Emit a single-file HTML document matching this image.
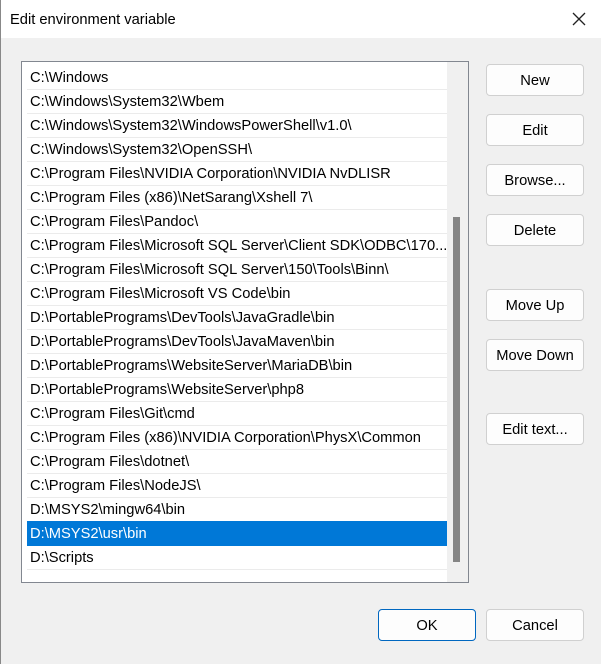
<!DOCTYPE html>
<html><head><meta charset="utf-8"><style>
*{margin:0;padding:0;box-sizing:border-box}
body{width:601px;height:664px;background:#f0f0f0;font-family:"Liberation Sans",sans-serif;font-size:14.7px;color:#000;position:relative;overflow:hidden}
.edge{position:absolute;left:0;top:0;width:1px;height:664px;background:#888}
.title{position:absolute;left:0;top:0;width:601px;height:38px;background:#fff}
.title span{position:absolute;left:10px;top:12px;font-size:14.7px}
.x{position:absolute;left:571px;top:11px}
.list{position:absolute;left:21px;top:61px;width:448px;height:522px;background:#fff;border:1px solid #828790}
.row{position:absolute;left:5px;width:420px;height:24px;line-height:23px;padding-top:1px;padding-left:3px;border-bottom:1px solid #ebebeb;white-space:nowrap;overflow:hidden}
.sel{background:#0078d7;color:#fff;border-bottom-color:#0078d7}
.sb{position:absolute;left:425px;top:0;width:21px;height:520px;background:#f0f0f0}
.thumb{position:absolute;left:6px;top:155px;width:7px;height:345px;background:#858585}
.btn{position:absolute;left:486px;width:98px;height:32px;background:#fdfdfd;border:1px solid #d0d0d0;border-radius:4px;text-align:center;line-height:33px;font-size:14.7px}
.ok{border:1px solid #0067c0}
</style></head><body>
<div class="title"><span>Edit environment variable</span>
<svg class="x" width="16" height="16" viewBox="0 0 16 16"><path d="M2 2L14 14M14 2L2 14" stroke="#222" stroke-width="1.3"/></svg></div>
<div class="edge"></div>
<div class="list">
<div class="row" style="top:4px">C:\Windows</div>
<div class="row" style="top:28px">C:\Windows\System32\Wbem</div>
<div class="row" style="top:52px">C:\Windows\System32\WindowsPowerShell\v1.0\</div>
<div class="row" style="top:76px">C:\Windows\System32\OpenSSH\</div>
<div class="row" style="top:100px">C:\Program Files\NVIDIA Corporation\NVIDIA NvDLISR</div>
<div class="row" style="top:124px">C:\Program Files (x86)\NetSarang\Xshell 7\</div>
<div class="row" style="top:148px">C:\Program Files\Pandoc\</div>
<div class="row" style="top:172px">C:\Program Files\Microsoft SQL Server\Client SDK\ODBC\170...</div>
<div class="row" style="top:196px">C:\Program Files\Microsoft SQL Server\150\Tools\Binn\</div>
<div class="row" style="top:220px">C:\Program Files\Microsoft VS Code\bin</div>
<div class="row" style="top:244px">D:\PortablePrograms\DevTools\JavaGradle\bin</div>
<div class="row" style="top:268px">D:\PortablePrograms\DevTools\JavaMaven\bin</div>
<div class="row" style="top:292px">D:\PortablePrograms\WebsiteServer\MariaDB\bin</div>
<div class="row" style="top:316px">D:\PortablePrograms\WebsiteServer\php8</div>
<div class="row" style="top:340px">C:\Program Files\Git\cmd</div>
<div class="row" style="top:364px">C:\Program Files (x86)\NVIDIA Corporation\PhysX\Common</div>
<div class="row" style="top:388px">C:\Program Files\dotnet\</div>
<div class="row" style="top:412px">C:\Program Files\NodeJS\</div>
<div class="row" style="top:436px">D:\MSYS2\mingw64\bin</div>
<div class="row sel" style="top:459px;height:25px;padding-top:2px">D:\MSYS2\usr\bin</div>
<div class="row" style="top:484px">D:\Scripts</div>
<div class="sb"><div class="thumb"></div></div>
</div>
<div class="btn" style="top:64px">New</div>
<div class="btn" style="top:114px">Edit</div>
<div class="btn" style="top:164px">Browse...</div>
<div class="btn" style="top:214px">Delete</div>
<div class="btn" style="top:289px">Move Up</div>
<div class="btn" style="top:339px">Move Down</div>
<div class="btn" style="top:413px">Edit text...</div>
<div class="btn ok" style="left:378px;top:609px">OK</div>
<div class="btn" style="top:609px">Cancel</div>
</body></html>
